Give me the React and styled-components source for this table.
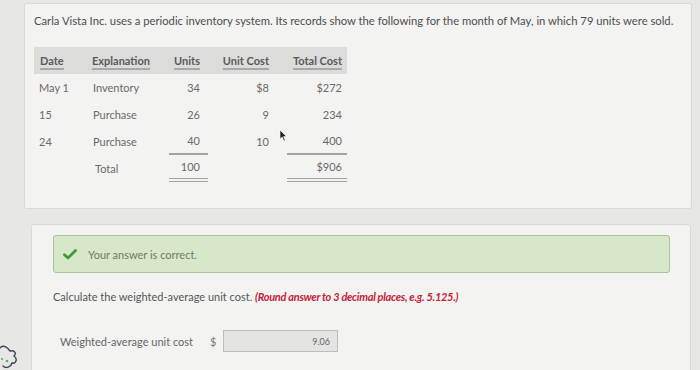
import React from "react";
import styled, { createGlobalStyle } from "styled-components";

const Global = createGlobalStyle`
  html, body { margin: 0; padding: 0; }
  body {
    background: #e7e7e5;
    font-family: Lato, "Open Sans", "Liberation Sans", sans-serif;
    color: #555;
    width: 700px;
    height: 370px;
    overflow: hidden;
  }
`;

const Page = styled.div`
  position: relative;
  width: 700px;
  height: 370px;
  overflow: hidden;
`;

const Card = styled.section`
  box-sizing: border-box;
  background: #f3f3f1;
  border: 1px solid #d9d9d7;
  border-radius: 3px;
  margin-left: ${(p) => p.$left}px;
  width: ${(p) => p.$width}px;
  margin-top: ${(p) => p.$top}px;
  height: ${(p) => p.$height}px;
  padding: ${(p) => p.$pad};
`;

const Intro = styled.p`
  margin: 0;
  font-size: 11.25px;
  line-height: 14px;
  color: #4e4e4e;
`;

const Table = styled.div`
  display: grid;
  grid-template-columns: 52px 80px 42px 68px 71px;
  width: 313px;
  margin-top: 19px;
`;

const HeadCell = styled.div`
  height: 27px;
  background: #dcdcda;
  display: flex;
  align-items: center;
  justify-content: ${(p) => (p.$right ? "flex-end" : "flex-start")};
  padding: ${(p) => p.$pad};
  font-size: 11px;
  font-weight: 700;
  color: #5a5a5a;
`;

const HeadLabel = styled.span`
  border-bottom: 2px solid #a9a9a9;
  padding-bottom: 1px;
  line-height: 13px;
  margin-top: 2px;
`;

const Cell = styled.div`
  box-sizing: border-box;
  height: 27px;
  display: flex;
  align-items: center;
  justify-content: ${(p) => (p.$right ? "flex-end" : "flex-start")};
  padding: ${(p) => p.$pad};
  font-size: 11px;
  color: #6a6a6a;
  margin-left: ${(p) => p.$ml || 0}px;
  border-bottom: ${(p) =>
    p.$line === "single"
      ? "2px solid #a3a3a3"
      : p.$line === "double"
      ? "4px double #a3a3a3"
      : "0"};
`;

const Alert = styled.div`
  box-sizing: border-box;
  height: 38px;
  background: #d6e8c8;
  border: 1px solid #a9c39c;
  border-radius: 3px;
  display: flex;
  align-items: center;
  gap: 11px;
  padding-left: 9px;
  font-size: 11px;
  color: #6f7a6a;
`;

const Prompt = styled.p`
  margin: 17px 0 0;
  font-size: 11px;
  line-height: 14px;
  color: #575757;
`;

const Hint = styled.span`
  color: #c3223a;
  font-weight: 700;
  font-style: italic;
  letter-spacing: -0.28px;
`;

const AnswerRow = styled.div`
  display: flex;
  align-items: center;
  margin-top: 26px;
  padding-left: 7px;
  font-size: 11px;
  color: #666;
`;

const Label = styled.span`
  width: 150px;
`;

const Dollar = styled.span`
  width: 13px;
  color: #777;
`;

const Input = styled.div`
  box-sizing: border-box;
  width: 115px;
  height: 22px;
  background: #e4e4e2;
  border: 1px solid #bdbdbb;
  display: flex;
  align-items: center;
  justify-content: flex-end;
  padding-right: 7px;
  font-size: 9px;
  color: #666;
`;

const Cursor = styled.svg`
  position: absolute;
  left: 279px;
  top: 129px;
`;

const Widget = styled.svg`
  position: absolute;
  left: -2px;
  top: 342px;
`;

const Check = () => (
  <svg width="14" height="11" viewBox="0 0 14 11">
    <path d="M1.5 5.8 L5 9 L12.5 1.5" fill="none" stroke="#3f9a3a" strokeWidth="2.8" strokeLinecap="round" strokeLinejoin="round" />
  </svg>
);

const rows = [
  ["May 1", "Inventory", "34", "$8", "$272"],
  ["15", "Purchase", "26", "9", "234"],
  ["24", "Purchase", "40", "10", "400"],
  ["", "Total", "100", "", "$906"],
];

export default function App() {
  return (
    <Page>
      <Global />
      <Card $left={24} $width={668} $top={3} $height={206} $pad="10px 9px">
        <Intro>
          Carla Vista Inc. uses a periodic inventory system. Its records show the following for the month of May, in which 79 units were sold.
        </Intro>
        <Table>
          <HeadCell $pad="0 0 0 6px"><HeadLabel>Date</HeadLabel></HeadCell>
          <HeadCell $pad="0 0 0 6px"><HeadLabel>Explanation</HeadLabel></HeadCell>
          <HeadCell $right $pad="0 8px 0 0"><HeadLabel>Units</HeadLabel></HeadCell>
          <HeadCell $right $pad="0 7px 0 0"><HeadLabel>Unit Cost</HeadLabel></HeadCell>
          <HeadCell $right $pad="0 5px 0 0"><HeadLabel>Total Cost</HeadLabel></HeadCell>
          {rows.map((r, i) => (
            <React.Fragment key={i}>
              <Cell $pad="0 0 0 5px">{r[0]}</Cell>
              <Cell $pad={i === 3 ? "0 0 0 9px" : "0 0 0 7px"}>{r[1]}</Cell>
              <Cell $right $pad="0 8px 0 0" $ml={3} $line={i === 2 ? "single" : i === 3 ? "double" : ""}>{r[2]}</Cell>
              <Cell $right $pad="0 7px 0 0">{r[3]}</Cell>
              <Cell $right $pad="0 5px 0 0" $ml={11} $line={i === 2 ? "single" : i === 3 ? "double" : ""}>{r[4]}</Cell>
            </React.Fragment>
          ))}
        </Table>
      </Card>
      <Card $left={31} $width={660} $top={15} $height={160} $pad="10px 20px 0 21px">
        <Alert>
          <Check />
          <span>Your answer is correct.</span>
        </Alert>
        <Prompt>
          Calculate the weighted-average unit cost. <Hint>(Round answer to 3 decimal places, e.g. 5.125.)</Hint>
        </Prompt>
        <AnswerRow>
          <Label>Weighted-average unit cost</Label>
          <Dollar>$</Dollar>
          <Input>9.06</Input>
        </AnswerRow>
      </Card>
      <Cursor width="8" height="13" viewBox="0 0 8 13">
        <path d="M1 1 L1 10 L3.2 8 L5 12 L6.3 11.4 L4.6 7.6 L7.4 7.4 Z" fill="#222" stroke="#fff" strokeWidth="0.6" />
      </Cursor>
      <Widget width="22" height="30" viewBox="0 0 22 30">
        <path d="M2 6 C6 2 10 6 12 9 C16 8 19 11 16 14 C20 17 18 22 14 21 C13 25 8 27 5 24" fill="none" stroke="#3a4a5a" strokeWidth="1.4" strokeLinecap="round" />
        <circle cx="9" cy="19" r="1.3" fill="#5ab06a" />
        <circle cx="4" cy="17" r="1.1" fill="#5ab06a" />
      </Widget>
    </Page>
  );
}
